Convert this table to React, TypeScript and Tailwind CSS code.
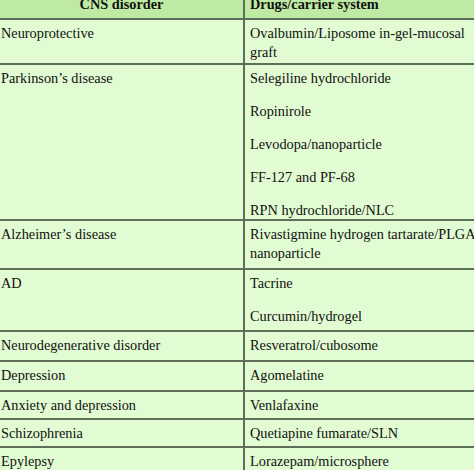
import React from "react";

type Row = {
  left: string;
  right: string[][];
  h: number;
};

const rows: Row[] = [
  { left: "Neuroprotective", right: [["Ovalbumin/Liposome in-gel-mucosal", "graft"]], h: 45 },
  {
    left: "Parkinson\u2019s disease",
    right: [
      ["Selegiline hydrochloride"],
      ["Ropinirole"],
      ["Levodopa/nanoparticle"],
      ["FF-127 and PF-68"],
      ["RPN hydrochloride/NLC"],
    ],
    h: 156,
  },
  {
    left: "Alzheimer\u2019s disease",
    right: [["Rivastigmine hydrogen tartarate/PLGA", "nanoparticle"]],
    h: 49,
  },
  { left: "AD", right: [["Tacrine"], ["Curcumin/hydrogel"]], h: 62 },
  { left: "Neurodegenerative disorder", right: [["Resveratrol/cubosome"]], h: 30 },
  { left: "Depression", right: [["Agomelatine"]], h: 30 },
  { left: "Anxiety and depression", right: [["Venlafaxine"]], h: 28 },
  { left: "Schizophrenia", right: [["Quetiapine fumarate/SLN"]], h: 28 },
  { left: "Epylepsy", right: [["Lorazepam/microsphere"]], h: 30 },
];

const App: React.FC = () => {
  return (
    <div
      className="w-[474px] h-[470px] overflow-hidden bg-[#e1fbd2] text-[#111111] text-[14.3px] leading-[19px]"
      style={{ fontFamily: '"Liberation Serif", "Times New Roman", serif' }}
    >
      {/* header row, cut off at the top */}
      <div className="flex h-[20px] bg-[#bfeaa3] border-b-2 border-[#5f6e58] overflow-hidden font-bold">
        <div className="w-[245px] shrink-0 border-r-2 border-[#5f6e58] text-center">
          <div className="-mt-[5px]">CNS disorder</div>
        </div>
        <div className="pl-[5px]">
          <div className="-mt-[5px]">Drugs/carrier system</div>
        </div>
      </div>
      {rows.map((row, i) => (
        <div
          key={i}
          className="flex border-b-2 border-[#5f6e58] box-border"
          style={{ height: row.h }}
        >
          <div className="w-[245px] shrink-0 border-r-2 border-[#5f6e58] pt-[4px] pl-[1px] whitespace-nowrap">
            {row.left}
          </div>
          <div className="pl-[5px] pt-[4px] whitespace-nowrap">
            {row.right.map((p, j) => (
              <div key={j} className={j > 0 ? "mt-[14px]" : ""}>
                {p.map((line, k) => (
                  <div key={k}>{line}</div>
                ))}
              </div>
            ))}
          </div>
        </div>
      ))}
    </div>
  );
};

export default App;
